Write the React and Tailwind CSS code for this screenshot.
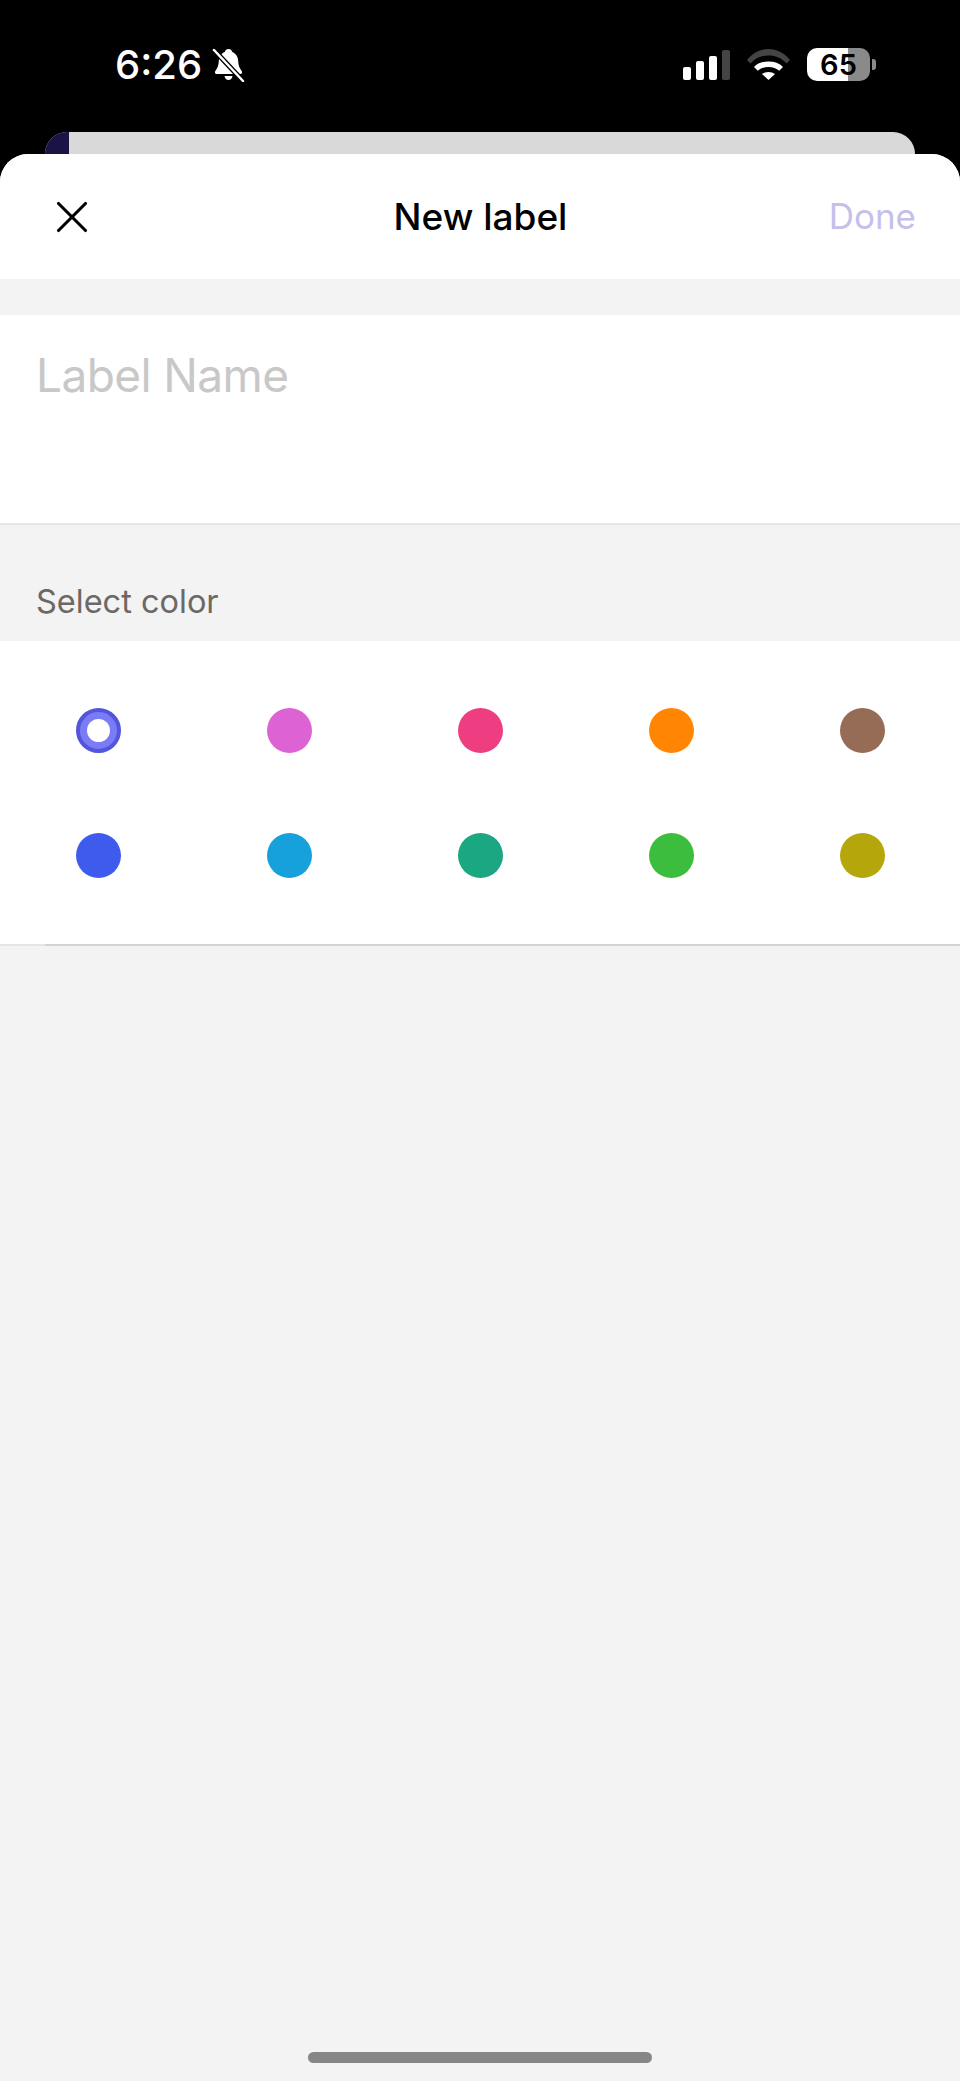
import React from "react";
import { X } from "lucide-react";

const colors = ["#dd62d3", "#ee3d80", "#ff8503", "#966c56"];
const colorsBottom = ["#3f5bed", "#17a1dc", "#1aa781", "#3cbd3d", "#b5a60b"];

const BellOff = () => (
  <svg width="33" height="34" viewBox="0 0 33 34" fill="none">
    <path
      d="M16.500 1C14.500 1 13.200 2.200 12.800 3.900 9 5.300 7 8.800 6.800 13c-.2 4-1 6.800-3.300 9.700-1.100 1.400-.7 3.300 1.300 3.300h23.400c2 0 2.400-1.900 1.300-3.300-2.300-2.900-3.100-5.700-3.300-9.700-.2-4.200-2.200-7.700-6-9.100C19.800 2.200 18.500 1 16.500 1Z"
      fill="#fff"
    />
    <path d="M12.500 28h8c-.4 2.400-2 4-4 4s-3.600-1.600-4-4Z" fill="#fff" />
    <path d="M2 2 31 33" stroke="#000" strokeWidth="5" />
    <path d="M2 2 31 33" stroke="#fff" strokeWidth="2.500" strokeLinecap="round" />
  </svg>
);

const Signal = () => (
  <div className="flex items-end gap-[5px]">
    <div className="w-[8px] h-[13px] rounded-[2px] bg-white" />
    <div className="w-[8px] h-[19px] rounded-[2px] bg-white" />
    <div className="w-[8px] h-[24px] rounded-[2px] bg-white" />
    <div className="w-[8px] h-[30px] rounded-[2px] bg-[#444444]" />
  </div>
);

const Wifi = () => (
  <svg width="43" height="31" viewBox="0 0 43 31">
    <path d="M0 11C5.500 4 13 0 21.500 0S37.500 4 43 11l-3.500 3.500C34.500 9 28.500 6.500 21.500 6.500S8.500 9 3.500 14.500Z" fill="#444444" />
    <path d="M7 18c3.500-3.800 8.500-5.500 14.500-5.500S32.500 14.200 36 18l-3.800 3.800c-2.700-2.500-6.300-3.800-10.700-3.800s-8 1.300-10.700 3.800Z" fill="#fff" />
    <path d="M15 25c1.800-1.300 3.900-2 6.500-2s4.700.7 6.500 2l-6.500 6Z" fill="#fff" />
  </svg>
);

const Battery = () => (
  <div className="flex items-center gap-[2px]">
    <div className="w-[63px] h-[33px] rounded-[10px] bg-[linear-gradient(90deg,#ffffff_65%,#8a8a8a_65%)] flex items-center justify-center text-[29px] font-semibold text-black leading-none">
      65
    </div>
    <div className="w-[4px] h-[11px] rounded-r-[3px] bg-[#8a8a8a]" />
  </div>
);

const Dot = ({ color }) => (
  <div className="flex justify-center">
    <div className="w-[45px] h-[45px] rounded-full" style={{ backgroundColor: color }} />
  </div>
);

export default function App() {
  return (
    <div className="w-[960px] h-[2081px] flex flex-col bg-black font-['Inter',sans-serif] overflow-hidden">
      {/* status bar */}
      <div className="h-[132px] flex items-start justify-between pl-[115px] pr-[84px] pt-[48px]">
        <div className="flex items-center gap-[10px]">
          <span className="text-[40px] leading-[34px] font-medium text-white">6:26</span>
          <BellOff />
        </div>
        <div className="flex items-center gap-[17px]">
          <Signal />
          <Wifi />
          <Battery />
        </div>
      </div>

      {/* sheet peeking from behind */}
      <div className="h-[22px] mx-[45px] shrink-0 rounded-t-[24px] overflow-hidden flex bg-[#d9d9d9]">
        <div className="w-[24px] bg-[#1a1446]" />
      </div>

      <div className="flex-1 flex flex-col rounded-t-[28px] bg-[#f3f3f3] overflow-hidden">
        <div className="h-[125px] shrink-0 bg-white grid grid-cols-3 items-center pl-[45px] pr-[44px]">
          <X size={54} strokeWidth={1.400} className="text-black" />
          <span className="text-[37px] font-medium text-black text-center whitespace-nowrap">New label</span>
          <span className="text-[35px] text-[#c5c0ea] text-right">Done</span>
        </div>

        <div className="mt-[36px] h-[210px] shrink-0 bg-white border-b-2 border-[#e6e6e6] pl-[36px] pt-[32px]">
          <span className="text-[46px] leading-[56px] tracking-[-0.6px] text-[#c8c8c8]">Label Name</span>
        </div>

        <div className="h-[116px] shrink-0 flex items-end pl-[36px] pb-[19px]">
          <span className="text-[32.500px] leading-[40px] text-[#6b6866]">Select color</span>
        </div>

        <div className="h-[303px] shrink-0 bg-white px-[2.500px] pt-[67px]">
          <div className="grid grid-cols-5 gap-y-[80px]">
            <div className="flex justify-center">
              <div className="w-[45px] h-[45px] rounded-full bg-[#7a7cf5] border-4 border-[#5355dc] flex items-center justify-center">
                <div className="w-[23px] h-[23px] rounded-full bg-white" />
              </div>
            </div>
            {colors.map((c) => <Dot key={c} color={c} />)}
            {colorsBottom.map((c) => <Dot key={c} color={c} />)}
          </div>
        </div>
        <div className="h-[2px] shrink-0 flex">
          <div className="w-[45px] bg-[#e8e4e4]" />
          <div className="flex-1 bg-[#d4d2d2]" />
        </div>

        <div className="flex-1 flex items-end justify-center pb-[18px]">
          <div className="w-[344px] h-[11px] rounded-full bg-[#868686]" />
        </div>
      </div>
    </div>
  );
}
